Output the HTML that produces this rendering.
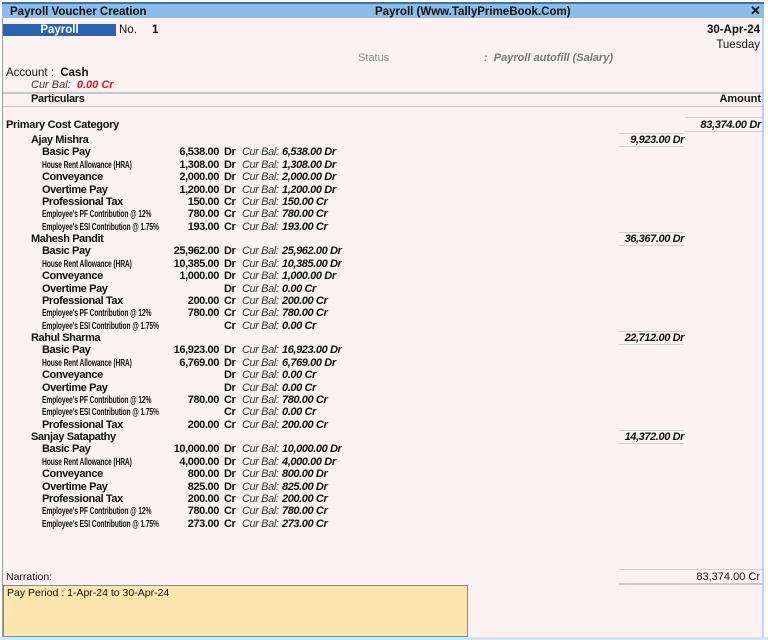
<!DOCTYPE html>
<html><head><meta charset="utf-8"><style>
*{margin:0;padding:0;box-sizing:border-box}
body{width:768px;height:640px;overflow:hidden;background:#fff;font-family:"Liberation Sans",Arial,sans-serif;color:#111;position:relative}
.frame{position:absolute;left:2px;top:2px;width:762px;height:635px;background:#fdf2f3;border-left:1px solid #9a9a9a;border-right:2px solid #b9d7ef}
.title{position:absolute;left:2px;top:2px;width:762px;height:16px;background:#8cbde6;border-top:2px solid #3d6fb0;font-weight:bold;font-size:11.5px;line-height:14px}
.abs{position:absolute;white-space:nowrap}
.b{font-weight:bold}
.r{position:absolute;left:0;width:768px;height:13px;font-size:11px;line-height:13px;font-weight:bold;letter-spacing:-0.4px}
.r span{position:absolute;white-space:nowrap;height:13px}
.n{left:42px}
.c{font-size:10.5px;display:inline-block;vertical-align:top;line-height:12px;transform:scaleX(0.64);transform-origin:left center;letter-spacing:-0.2px;font-style:normal}
.a{left:110px;width:109px;text-align:right}
.d{left:224px}
.cb{left:242px;font-style:italic;font-weight:normal;color:#333}
.v{left:282px;font-style:italic}
.e{left:31px}
.t{left:619px;width:65px;text-align:right;font-style:italic;border-top:1px solid #d0d0d0;border-bottom:1px solid #d0d0d0;height:14px !important;top:-1px}
.hl{position:absolute;left:3px;width:761px;height:1px;background:#c8c8c8}
</style></head><body>
<div class="frame"></div>
<div class="title"><span class="abs" style="left:8px;top:1px">Payroll Voucher Creation</span><span class="abs" style="left:373px;top:1px">Payroll (Www.TallyPrimeBook.Com)</span><span class="abs" style="left:748px;top:0px;font-size:13px">✕</span></div>
<div class="abs b" style="left:3px;top:24px;width:113px;height:12px;background:#2a64b0;color:#fff;font-size:11.5px;line-height:12px;text-align:center">Payroll</div>
<div class="abs" style="left:119px;top:24px;font-size:11.5px;line-height:13px">No.</div>
<div class="abs b" style="left:152px;top:24px;font-size:11.5px;line-height:13px">1</div>
<div class="abs b" style="right:8px;top:24px;font-size:11.5px;line-height:13px">30-Apr-24</div>
<div class="abs" style="right:8px;top:39px;font-size:11.5px;line-height:13px">Tuesday</div>
<div class="abs" style="left:358px;top:52px;font-size:11px;line-height:13px;color:#888">Status</div>
<div class="abs" style="left:484px;top:52px;font-size:11px;line-height:13px;color:#777;font-style:italic;font-weight:bold">:&nbsp; Payroll autofill (Salary)</div>
<div class="abs" style="left:6px;top:67px;font-size:11.5px;line-height:13px">Account :&nbsp; <b>Cash</b></div>
<div class="abs" style="left:31px;top:79px;font-size:11px;line-height:13px;font-style:italic;color:#333">Cur Bal:&nbsp; <b style="color:#f01010">0.00 Cr</b></div>
<div class="hl" style="top:92px;height:2px"></div>
<div class="abs b" style="left:31px;top:93px;font-size:11px;line-height:13px;letter-spacing:-0.3px">Particulars</div>
<div class="abs b" style="right:7px;top:93px;font-size:11px;line-height:13px">Amount</div>
<div class="hl" style="top:106px"></div>
<div class="abs b" style="left:6px;top:119px;font-size:11px;line-height:13px;letter-spacing:-0.3px">Primary Cost Category</div>
<div class="abs b" style="left:685px;top:117px;width:78px;height:15px;text-align:right;font-style:italic;font-size:11px;line-height:14px;border-top:1px solid #d0d0d0;border-bottom:1px solid #d0d0d0;padding-right:2px;letter-spacing:-0.3px">83,374.00 Dr</div>

<div class="r" style="top:134px"><span class="e">Ajay Mishra</span><span class="t">9,923.00 Dr</span></div>
<div class="r" style="top:146px"><span class="n">Basic Pay</span><span class="a">6,538.00</span><span class="d">Dr</span><span class="cb">Cur Bal:</span><span class="v">6,538.00 Dr</span></div>
<div class="r" style="top:159px"><span class="n"><i class="c">House Rent Allowance (HRA)</i></span><span class="a">1,308.00</span><span class="d">Dr</span><span class="cb">Cur Bal:</span><span class="v">1,308.00 Dr</span></div>
<div class="r" style="top:171px"><span class="n">Conveyance</span><span class="a">2,000.00</span><span class="d">Dr</span><span class="cb">Cur Bal:</span><span class="v">2,000.00 Dr</span></div>
<div class="r" style="top:184px"><span class="n">Overtime Pay</span><span class="a">1,200.00</span><span class="d">Dr</span><span class="cb">Cur Bal:</span><span class="v">1,200.00 Dr</span></div>
<div class="r" style="top:196px"><span class="n">Professional Tax</span><span class="a">150.00</span><span class="d">Cr</span><span class="cb">Cur Bal:</span><span class="v">150.00 Cr</span></div>
<div class="r" style="top:208px"><span class="n"><i class="c">Employee's PF Contribution @ 12%</i></span><span class="a">780.00</span><span class="d">Cr</span><span class="cb">Cur Bal:</span><span class="v">780.00 Cr</span></div>
<div class="r" style="top:221px"><span class="n"><i class="c">Employee's ESI Contribution @ 1.75%</i></span><span class="a">193.00</span><span class="d">Cr</span><span class="cb">Cur Bal:</span><span class="v">193.00 Cr</span></div>

<div class="r" style="top:233px"><span class="e">Mahesh Pandit</span><span class="t">36,367.00 Dr</span></div>
<div class="r" style="top:245px"><span class="n">Basic Pay</span><span class="a">25,962.00</span><span class="d">Dr</span><span class="cb">Cur Bal:</span><span class="v">25,962.00 Dr</span></div>
<div class="r" style="top:258px"><span class="n"><i class="c">House Rent Allowance (HRA)</i></span><span class="a">10,385.00</span><span class="d">Dr</span><span class="cb">Cur Bal:</span><span class="v">10,385.00 Dr</span></div>
<div class="r" style="top:270px"><span class="n">Conveyance</span><span class="a">1,000.00</span><span class="d">Dr</span><span class="cb">Cur Bal:</span><span class="v">1,000.00 Dr</span></div>
<div class="r" style="top:283px"><span class="n">Overtime Pay</span><span class="d">Dr</span><span class="cb">Cur Bal:</span><span class="v">0.00 Cr</span></div>
<div class="r" style="top:295px"><span class="n">Professional Tax</span><span class="a">200.00</span><span class="d">Cr</span><span class="cb">Cur Bal:</span><span class="v">200.00 Cr</span></div>
<div class="r" style="top:307px"><span class="n"><i class="c">Employee's PF Contribution @ 12%</i></span><span class="a">780.00</span><span class="d">Cr</span><span class="cb">Cur Bal:</span><span class="v">780.00 Cr</span></div>
<div class="r" style="top:320px"><span class="n"><i class="c">Employee's ESI Contribution @ 1.75%</i></span><span class="d">Cr</span><span class="cb">Cur Bal:</span><span class="v">0.00 Cr</span></div>

<div class="r" style="top:332px"><span class="e">Rahul Sharma</span><span class="t">22,712.00 Dr</span></div>
<div class="r" style="top:344px"><span class="n">Basic Pay</span><span class="a">16,923.00</span><span class="d">Dr</span><span class="cb">Cur Bal:</span><span class="v">16,923.00 Dr</span></div>
<div class="r" style="top:357px"><span class="n"><i class="c">House Rent Allowance (HRA)</i></span><span class="a">6,769.00</span><span class="d">Dr</span><span class="cb">Cur Bal:</span><span class="v">6,769.00 Dr</span></div>
<div class="r" style="top:369px"><span class="n">Conveyance</span><span class="d">Dr</span><span class="cb">Cur Bal:</span><span class="v">0.00 Cr</span></div>
<div class="r" style="top:382px"><span class="n">Overtime Pay</span><span class="d">Dr</span><span class="cb">Cur Bal:</span><span class="v">0.00 Cr</span></div>
<div class="r" style="top:394px"><span class="n"><i class="c">Employee's PF Contribution @ 12%</i></span><span class="a">780.00</span><span class="d">Cr</span><span class="cb">Cur Bal:</span><span class="v">780.00 Cr</span></div>
<div class="r" style="top:406px"><span class="n"><i class="c">Employee's ESI Contribution @ 1.75%</i></span><span class="d">Cr</span><span class="cb">Cur Bal:</span><span class="v">0.00 Cr</span></div>
<div class="r" style="top:419px"><span class="n">Professional Tax</span><span class="a">200.00</span><span class="d">Cr</span><span class="cb">Cur Bal:</span><span class="v">200.00 Cr</span></div>

<div class="r" style="top:431px"><span class="e">Sanjay Satapathy</span><span class="t">14,372.00 Dr</span></div>
<div class="r" style="top:443px"><span class="n">Basic Pay</span><span class="a">10,000.00</span><span class="d">Dr</span><span class="cb">Cur Bal:</span><span class="v">10,000.00 Dr</span></div>
<div class="r" style="top:456px"><span class="n"><i class="c">House Rent Allowance (HRA)</i></span><span class="a">4,000.00</span><span class="d">Dr</span><span class="cb">Cur Bal:</span><span class="v">4,000.00 Dr</span></div>
<div class="r" style="top:468px"><span class="n">Conveyance</span><span class="a">800.00</span><span class="d">Dr</span><span class="cb">Cur Bal:</span><span class="v">800.00 Dr</span></div>
<div class="r" style="top:481px"><span class="n">Overtime Pay</span><span class="a">825.00</span><span class="d">Dr</span><span class="cb">Cur Bal:</span><span class="v">825.00 Dr</span></div>
<div class="r" style="top:493px"><span class="n">Professional Tax</span><span class="a">200.00</span><span class="d">Cr</span><span class="cb">Cur Bal:</span><span class="v">200.00 Cr</span></div>
<div class="r" style="top:505px"><span class="n"><i class="c">Employee's PF Contribution @ 12%</i></span><span class="a">780.00</span><span class="d">Cr</span><span class="cb">Cur Bal:</span><span class="v">780.00 Cr</span></div>
<div class="r" style="top:518px"><span class="n"><i class="c">Employee's ESI Contribution @ 1.75%</i></span><span class="a">273.00</span><span class="d">Cr</span><span class="cb">Cur Bal:</span><span class="v">273.00 Cr</span></div>

<div class="abs" style="left:6px;top:571px;font-size:10.5px;line-height:13px">Narration:</div>
<div class="abs" style="left:619px;top:569px;width:144px;height:16px;border-top:1px solid #d0d0d0;border-bottom:2px solid #c8c8c8;text-align:right;font-size:11px;line-height:14px;padding-right:3px">83,374.00 Cr</div>
<div class="abs" style="left:3px;top:585px;width:465px;height:52px;background:#fde6b0;border:1px solid #5a9ab8;font-size:10.5px;line-height:14px;padding-left:3px">Pay Period : 1-Apr-24 to 30-Apr-24</div>
<div class="abs" style="left:0;top:637px;width:768px;height:3px;background:#d4e5f4"></div>
</body></html>
